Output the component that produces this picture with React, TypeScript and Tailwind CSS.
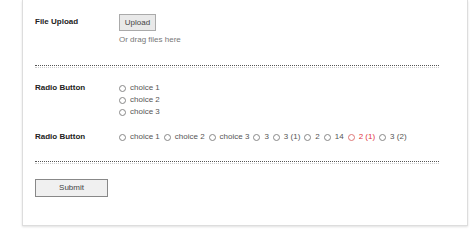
import React from "react";

const Radio = ({ label, red = false }: { label: string; red?: boolean }) => (
  <label className="flex items-center gap-[4px]">
    <span
      className={`inline-block w-[7px] h-[7px] rounded-full border bg-white ${
        red ? "border-[#d77]" : "border-[#888]"
      }`}
    />
    <span className={red ? "text-[#e0333a]" : "text-[#555]"}>{label}</span>
  </label>
);

const Divider = () => (
  <div className="mr-[28px]">
    <div className="border-t border-dotted border-[#555]" />
    <div className="mt-[1px] border-t border-dotted border-[#ccc]" />
  </div>
);

const App = () => {
  const inline = ["choice 1", "choice 2", "choice 3", "3", "3 (1)", "2", "14", "2 (1)", "3 (2)"];

  return (
    <div
      className="min-h-[240px] bg-white pl-[22px] text-[8px] leading-[8px]"
      style={{ fontFamily: '"Liberation Sans", Arial, sans-serif' }}
    >
      <div className="w-[446px] h-[226px] border-x border-b border-[#ddd] shadow-[0_1px_2px_rgba(0,0,0,0.12)] pl-[12px]">
        {/* File upload */}
        <div className="flex pt-[14px]">
          <div className="w-[84px] pt-[4px] font-bold text-[#222]">File Upload</div>
          <div>
            <button className="h-[17px] w-[37px] border border-[#aaa] bg-[#e9e9e9] text-[#444] text-[8px]">
              Upload
            </button>
            <div className="mt-[5px] text-[#777]">Or drag files here</div>
          </div>
        </div>

        <div className="mt-[21px]">
          <Divider />
        </div>

        {/* Stacked radios */}
        <div className="flex mt-[16px]">
          <div className="w-[84px] font-bold text-[#222]">Radio Button</div>
          <div className="flex flex-col gap-[4px]">
            <Radio label="choice 1" />
            <Radio label="choice 2" />
            <Radio label="choice 3" />
          </div>
        </div>

        {/* Inline radios */}
        <div className="flex mt-[17px]">
          <div className="w-[84px] font-bold text-[#222]">Radio Button</div>
          <div className="flex gap-[4px]">
            {inline.map((c, i) => (
              <Radio key={i} label={c} red={c === "2 (1)"} />
            ))}
          </div>
        </div>

        <div className="mt-[20px]">
          <Divider />
        </div>

        <button className="mt-[15px] h-[18px] w-[73px] border border-[#888] bg-[#f0f0f0] text-[#444] text-[8px]">
          Submit
        </button>
      </div>
    </div>
  );
};

export default App;
